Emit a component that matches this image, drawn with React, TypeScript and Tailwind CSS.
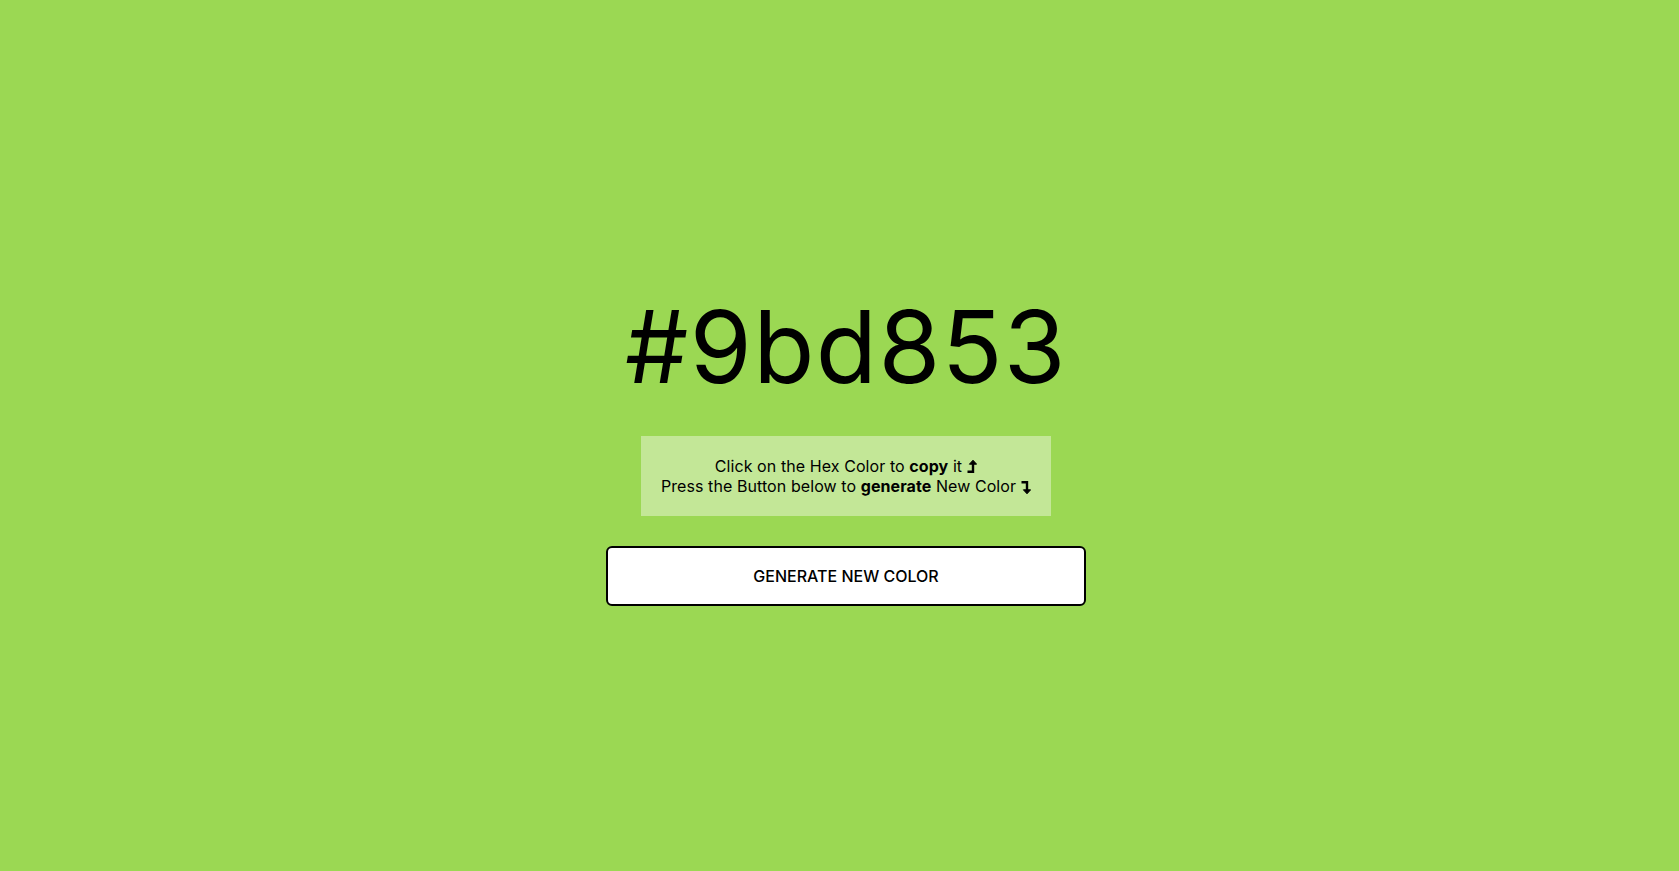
import React from "react";

function UpArrow() {
  return (
    <svg width="10" height="14" viewBox="0 0 10 14" className="inline-block align-[-1px] ml-[5px]" fill="none" stroke="black" strokeWidth="2.4">
      <path d="M0.5 12.8 H6 V3" />
      <path d="M2.4 5.2 L6 1.2 L9.6 5.2 Z" fill="black" strokeWidth="1" strokeLinejoin="round" />
    </svg>
  );
}

function DownArrow() {
  return (
    <svg width="10" height="14" viewBox="0 0 10 14" className="inline-block align-[-3px] ml-[5px]" fill="none" stroke="black" strokeWidth="2.4">
      <path d="M0.5 1.2 H6 V11" />
      <path d="M2.4 8.8 L6 12.8 L9.6 8.8 Z" fill="black" strokeWidth="1" strokeLinejoin="round" />
    </svg>
  );
}

export default function App() {
  return (
    <div
      className="h-screen w-full bg-[#9bd853] flex flex-col items-center justify-center pt-[32px] pl-[13px]"
      style={{ fontFamily: "Inter, 'Noto Sans', sans-serif" }}
    >
      <h1 className="text-[100px] leading-none font-normal tracking-[0.014em] text-black cursor-pointer">#9bd853</h1>
      <div className="mt-[39px] bg-white/40 px-5 py-5 text-center text-[16px] leading-5 tracking-[0.005em] text-black">
        <div>
          Click on the Hex Color to <b className="font-bold">copy</b> it
          <UpArrow />
        </div>
        <div>
          Press the Button below to <b className="font-bold">generate</b> New Color
          <DownArrow />
        </div>
      </div>
      <button className="mt-[30px] w-[480px] h-[60px] bg-white border-2 border-black rounded-md text-[16px] font-medium uppercase text-black">
        Generate New Color
      </button>
    </div>
  );
}
